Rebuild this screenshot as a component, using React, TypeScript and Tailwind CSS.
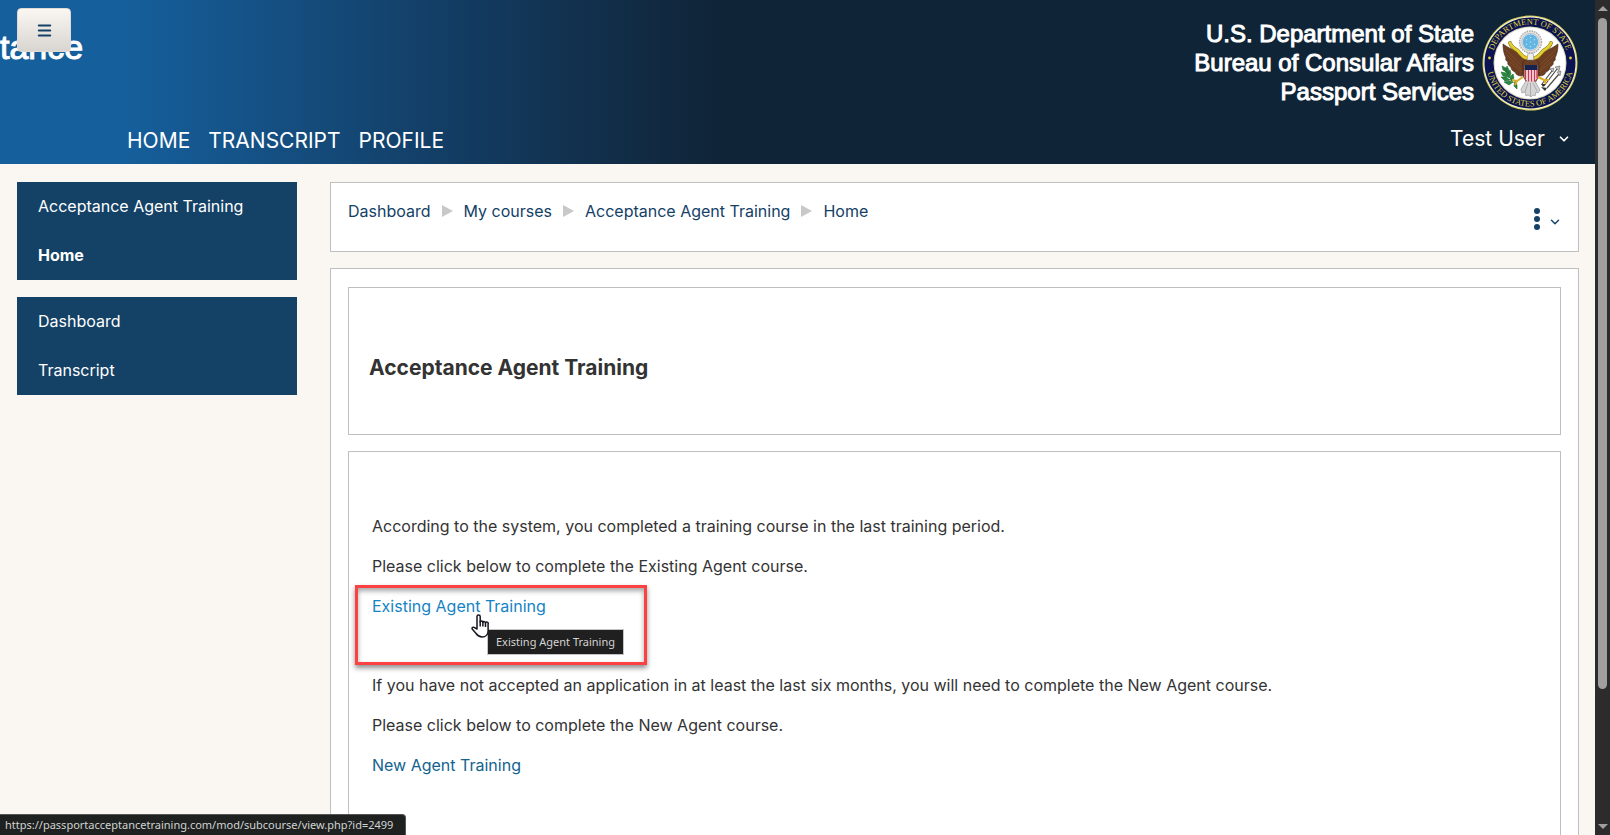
import { ChevronDown, Menu } from "lucide-react";

const navLinks = ["HOME", "TRANSCRIPT", "PROFILE"];
const crumbs = ["Dashboard", "My courses", "Acceptance Agent Training", "Home"];

function Seal() {
  return (
    <svg viewBox="0 0 96 96" className="size-24 shrink-0" role="img" aria-label="Department of State seal">
      <defs>
        <path id="ringTop" d="M9.5 48a38.5 38.5 0 0 1 77 0" />
        <path id="ringBottom" d="M4.500 48a43.500 43.500 0 0 0 87 0" />
      </defs>
      <circle cx="48" cy="48" r="47.5" fill="#d8cf5c" />
      <circle cx="48" cy="48" r="46.5" fill="#f4f2dc" />
      <circle cx="48" cy="48" r="45.5" fill="#0b1350" />
      <circle cx="48" cy="48" r="36.5" fill="#d9d6c0" />
      <circle cx="48" cy="48" r="35.5" fill="#fff" />
      <g fill="#ddcf3c" fontFamily="Liberation Serif, serif" fontSize="8.500" textAnchor="middle">
        <text>
          <textPath href="#ringTop" startOffset="50%">DEPARTMENT OF STATE</textPath>
        </text>
        <text>
          <textPath href="#ringBottom" startOffset="50%">UNITED STATES OF AMERICA</textPath>
        </text>
      </g>
      <circle cx="7.5" cy="43" r="1.4" fill="#ddcf3c" />
      <circle cx="88.5" cy="43" r="1.4" fill="#ddcf3c" />
      {/* wings and body */}
      <g fill="#6d3f22" stroke="#3d2415" strokeWidth=".6">
        <path d="M21 29c0 6 1 10 3 14-1 1 0 3 2 4-1 2 1 4 3 5 0 3 2 4 4 5 1 3 4 4 7 4l4-8v-9c-4-1-6-5-10-8-5-2-9-4-13-7z" />
        <path d="M76 29c0 6-1 10-3 14 1 1 0 3-2 4 1 2-1 4-3 5 0 3-2 4-4 5-1 3-4 4-7 4l-4-8v-9c4-1 6-5 10-8 5-2 9-4 13-7z" />
        <path d="M41 47l5-4h6l5 4v14l-4 7h-8l-4-7z" />
      </g>
      <g stroke="#8a5430" strokeWidth=".6" fill="none">
        <path d="M23 34l16 16M25 40l14 14M28 47l12 10M74 34L58 50M72 40L58 54M69 47L57 57" />
      </g>
      {/* scroll */}
      <g fill="none" stroke="#8a7a20" strokeWidth="3.8" strokeLinecap="round">
        <path d="M28 28c2 6 5 5 8 8s4 6 8 7M69 28c-2 6-5 5-8 8s-4 6-8 7" />
      </g>
      <g fill="none" stroke="#e3cf2e" strokeWidth="2.6" strokeLinecap="round">
        <path d="M28 28c2 6 5 5 8 8s4 6 8 7M69 28c-2 6-5 5-8 8s-4 6-8 7" />
      </g>
      <path d="M46 38h5l1 7h-7z" fill="#eee" stroke="#777" strokeWidth=".5" />
      <path d="M46 40l-4 2 4 1z" fill="#e3b52e" />
      {/* glory */}
      <circle cx="48.5" cy="27" r="11" fill="#e4e4e4" stroke="#aaa" strokeWidth="1.4" strokeDasharray="1.5 1" />
      <circle cx="48.5" cy="27" r="8.6" fill="#fff" stroke="#999" strokeWidth=".6" />
      <circle cx="48.5" cy="27" r="7.8" fill="#63b5e2" />
      <g fill="#b9e2f6">
        <circle cx="48.5" cy="22.5" r=".7" />
        <circle cx="48.5" cy="27" r=".7" />
        <circle cx="48.5" cy="31.5" r=".7" />
        <circle cx="44.6" cy="24.7" r=".7" />
        <circle cx="52.4" cy="24.7" r=".7" />
        <circle cx="44.6" cy="29.3" r=".7" />
        <circle cx="52.4" cy="29.3" r=".7" />
      </g>
      {/* tail */}
      <path d="M44 66h9l5 9-2 3-2-1-1 4-2-1-2 2-3-2-2 1-1-4-3 1-1-4z" fill="#d5d5d5" stroke="#8d8d8d" strokeWidth=".6" />
      <path d="M46 68l-3 9M48.5 68v13M51 68l4 8" stroke="#999" strokeWidth=".7" />
      {/* olive branch */}
      <g stroke="#17692f" fill="#2a8a3c" strokeWidth=".6">
        <path d="M20 51l4 2 1 4-4-2zM25 51l2 4-1 4-3-3zM19 57l5 1 2 4-5-1zM28 55l1 4-2 4-2-4zM19 62l5 0 4 3-5 1zM31 59l1 4-3 3-1-4zM22 67l5-1 4 1-4 3zM33 66l2 4 0 4-3-3z" />
        <path d="M22 53c3 7 7 12 13 18" fill="none" />
      </g>
      {/* arrows */}
      <g stroke="#4c4c4c" strokeWidth="1.2" fill="none">
        <path d="M62 71l13-17M65 73l12-14M60 69l10-13" />
      </g>
      <path d="M73 52l5-1-1 5zM75 57l4-1-1 5zM68 54l4-1-1 4z" fill="#bdbdbd" stroke="#555" strokeWidth=".5" />
      <path d="M59 72l6 1-2 3zM59 69l5 0-3 3z" fill="#333" />
      <path d="M41 62l-6 4-5-1m5 1l-2 4M56 62l6 3 5 0m-5 0l2 4" stroke="#d9ad27" strokeWidth="2" fill="none" />
      {/* shield */}
      <path d="M42.5 50h13v13l-3 3.5h-7l-3-3.5z" fill="#f6dfe3" />
      <path d="M43.5 55v9M46.5 55v11.5M49.5 55v11.5M52.5 55v11.5M55 55v8.5" stroke="#cf3350" strokeWidth="1.3" />
      <path d="M42.5 50h13v5h-13z" fill="#17234f" />
    </svg>
  );
}

function Header() {
  return (
    <header className="flex h-[164px] flex-col justify-between bg-linear-to-r from-[#155f9c] from-8% via-[#123a5f] via-30% to-[#102437] to-45% text-white">
      <div className="flex items-start justify-between pr-[17px]">
        <div className="pt-[26px] font-['Liberation_Sans',sans-serif] text-[34px] leading-[42px] [-webkit-text-stroke:1px_white]">
          tance
        </div>
        <div className="flex gap-2 pt-[15px]">
          <div className="pt-1 text-right font-['Liberation_Sans',sans-serif] text-2xl leading-[29px] [-webkit-text-stroke:1px_white]">
            <p>U.S. Department of State</p>
            <p>Bureau of Consular Affairs</p>
            <p>Passport Services</p>
          </div>
          <Seal />
        </div>
      </div>
      <div className="flex items-start justify-between pr-6 pb-2 pl-[127px] text-[21px] leading-[30px]">
        <nav className="flex gap-[18px] pt-0.5">
          {navLinks.map((label) => (
            <a key={label} href="#">
              {label}
            </a>
          ))}
        </nav>
        <button className="flex items-center gap-3">
          Test User
          <ChevronDown size={14} strokeWidth={3} />
        </button>
      </div>
    </header>
  );
}

function SideBlock({ items, active }: { items: string[]; active?: string }) {
  return (
    <ul className="bg-[#144166] text-white">
      {items.map((item) => (
        <li key={item}>
          <a href="#" className={`block px-[21px] py-3 leading-[25px] ${item === active ? "font-bold" : ""}`}>
            {item}
          </a>
        </li>
      ))}
    </ul>
  );
}

function Breadcrumb() {
  return (
    <div className="flex h-[70px] justify-between border border-[#bfbfbf] bg-white pr-4 pl-[17px]">
      <nav aria-label="Breadcrumb" className="pt-4">
        <ol className="flex items-center gap-[11px] leading-6 text-[#144166]">
          {crumbs.map((crumb, i) => (
            <li key={crumb} className="flex items-center gap-[11px]">
              {i > 0 && (
                <svg viewBox="0 0 11 12" className="h-3 w-[11px] fill-[#c8c8c8]">
                  <path d="M0 0l11 6-11 6z" />
                </svg>
              )}
              <a href="#">{crumb}</a>
            </li>
          ))}
        </ol>
      </nav>
      <button aria-label="Actions" className="flex items-center gap-2 pt-1 text-[#144166]">
        <svg viewBox="0 0 6 22" className="h-[22px] w-1.5 fill-current">
          <circle cx="3" cy="3" r="3" />
          <circle cx="3" cy="11" r="3" />
          <circle cx="3" cy="19" r="3" />
        </svg>
        <ChevronDown size={14} strokeWidth={2.5} className="mt-1.5" />
      </button>
    </div>
  );
}

function HandCursor() {
  return (
    <svg viewBox="0 0 18 24" className="absolute top-5 left-[99px] z-20 h-6 w-[18px]" fill="#fff" stroke="#16161f" strokeWidth="1.5" strokeLinejoin="round">
      <path d="M6 15V2.500a1.600 1.600 0 0 1 3.200 0V8a1.400 1.400 0 0 1 2.700.3 1.400 1.400 0 0 1 2.600.6 1.300 1.300 0 0 1 2.600 1V17c0 3.500-2.500 6-6 6-3 0-4.500-1.300-6-3.500L1.200 15c-.6-1.200.6-2.300 1.900-1.600z" />
      <path d="M9.2 7v5.5M11.9 8v4.5M14.5 9v4" />
    </svg>
  );
}

function Content() {
  return (
    <div className="space-y-4 border border-[#bfbfbf] bg-white px-[17px] pt-[18px] pb-4">
      <section className="flex h-[148px] items-center border border-[#bfbfbf] px-5">
        <h1 className="pt-3.5 text-[21px] leading-7 font-bold text-[#333]">Acceptance Agent Training</h1>
      </section>
      <section className="min-h-[420px] space-y-4 border border-[#bfbfbf] px-[23px] pt-[62px] leading-6">
        <p>According to the system, you completed a training course in the last training period.</p>
        <p>Please click below to complete the Existing Agent course.</p>
        <div className="relative pb-[39px]">
          <a href="#" className="text-[#1583c4]">
            Existing Agent Training
          </a>
          <div className="pointer-events-none absolute -top-[9px] -left-[17px] h-20 w-[292px] border-3 border-[#fb4141] shadow-[0_3px_5px_rgba(0,0,0,0.45),inset_0_3px_5px_rgba(0,0,0,0.35)]" />
          <HandCursor />
          <div
            role="tooltip"
            className="absolute top-[35px] left-[115px] z-10 border border-[#c4c4c4] bg-[#202020] px-2 py-0.5 font-['Noto_Sans',sans-serif] text-[11px] leading-5 whitespace-nowrap text-[#d4d4d4]">
            Existing Agent Training
          </div>
        </div>
        <p>
          If you have not accepted an application in at least the last six months, you will need to complete the New Agent course.
        </p>
        <p>Please click below to complete the New Agent course.</p>
        <p>
          <a href="#" className="text-[#14628f]">
            New Agent Training
          </a>
        </p>
      </section>
    </div>
  );
}

function Scrollbar() {
  return (
    <div aria-hidden="true" className="flex w-[15px] shrink-0 flex-col items-center bg-[#2c2c2c] py-1.5">
      <svg viewBox="0 0 10 5" className="h-[5px] w-2.5 fill-[#9f9f9f]">
        <path d="M0 5l5-5 5 5z" />
      </svg>
      <div className="my-[7px] min-h-0 w-full flex-1 px-[3px]">
        <div className="h-[84%] rounded-full bg-[#9f9f9f]" />
      </div>
      <svg viewBox="0 0 10 5" className="h-[5px] w-2.5 fill-[#9f9f9f]">
        <path d="M0 0l5 5 5-5z" />
      </svg>
    </div>
  );
}

export default function App() {
  return (
    <div className="flex h-screen overflow-hidden font-['Inter',sans-serif] text-base text-[#333]">
      <div className="relative min-w-0 flex-1 overflow-hidden bg-[#faf6f1]">
        <Header />
        <button
          aria-label="Toggle menu"
          className="absolute top-2 left-[17px] flex h-11 w-[54px] items-center justify-center rounded-sm border border-[#dedad5] bg-linear-to-b from-[#faf6f1] to-[#d9d6d2] text-[#144166]">
          <Menu size={17} strokeWidth={3} />
        </button>
        <div className="flex items-start gap-[33px] pt-[18px] pr-4 pl-[17px]">
          <aside className="w-[280px] shrink-0 space-y-[17px]">
            <SideBlock items={["Acceptance Agent Training", "Home"]} active="Home" />
            <SideBlock items={["Dashboard", "Transcript"]} />
          </aside>
          <main className="min-w-0 flex-1 space-y-4">
            <Breadcrumb />
            <Content />
          </main>
        </div>
        <div className="absolute bottom-0 left-0 rounded-tr border-t border-r border-[#555] bg-[#1f2120] px-[5px] pr-3 font-['Noto_Sans',sans-serif] text-[11px] leading-5 text-[#cfd3d3]">
          https://passportacceptancetraining.com/mod/subcourse/view.php?id=2499
        </div>
      </div>
      <Scrollbar />
    </div>
  );
}
